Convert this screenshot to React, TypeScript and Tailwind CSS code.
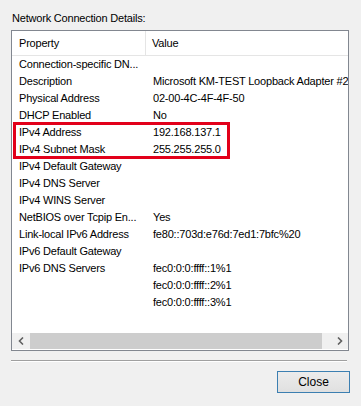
const rows: [string, string][] = [
  ["Connection-specific DN...", ""],
  ["Description", "Microsoft KM-TEST Loopback Adapter #2"],
  ["Physical Address", "02-00-4C-4F-4F-50"],
  ["DHCP Enabled", "No"],
  ["IPv4 Address", "192.168.137.1"],
  ["IPv4 Subnet Mask", "255.255.255.0"],
  ["IPv4 Default Gateway", ""],
  ["IPv4 DNS Server", ""],
  ["IPv4 WINS Server", ""],
  ["NetBIOS over Tcpip En...", "Yes"],
  ["Link-local IPv6 Address", "fe80::703d:e76d:7ed1:7bfc%20"],
  ["IPv6 Default Gateway", ""],
  ["IPv6 DNS Servers", "fec0:0:0:ffff::1%1"],
  ["", "fec0:0:0:ffff::2%1"],
  ["", "fec0:0:0:ffff::3%1"],
];

function Chevron({ dir }: { dir: "left" | "right" }) {
  return (
    <svg width="6" height="8" viewBox="0 0 6 8">
      <path
        d={dir === "left" ? "M5 0.5 L1.5 4 L5 7.5" : "M1 0.5 L4.5 4 L1 7.5"}
        fill="none"
        stroke="#606060"
        strokeWidth="1.6"
      />
    </svg>
  );
}

export default function App() {
  return (
    <div
      className="relative w-[361px] h-[406px] bg-[#f0f0f0] text-black text-[11px] tracking-[-0.2px] overflow-hidden"
      style={{ fontFamily: '"Liberation Sans", Arial, sans-serif' }}
    >
      <div className="pt-[11px] pl-[12px] h-[30px] leading-[15px]">
        Network Connection Details:
      </div>

      {/* list view */}
      <div className="ml-[11px] w-[338px] h-[321px] border border-[#828790] bg-white flex flex-col overflow-hidden">
        <div className="flex h-[25px] border-b border-[#e5e5e5] items-center">
          <div className="w-[134px] h-full pl-[7px] flex items-center border-r border-[#e5e5e5]">
            Property
          </div>
          <div className="pl-[6px]">Value</div>
        </div>
        <div className="flex flex-col">
          {rows.map(([p, v], i) => (
            <div key={i} className="flex h-[17px] items-center whitespace-nowrap">
              <div className="w-[135px] pl-[7px] shrink-0">{p}</div>
              <div className="pl-[6px]">{v}</div>
            </div>
          ))}
        </div>
        <div className="flex-1" />
        {/* horizontal scrollbar */}
        <div className="flex h-[16px] bg-[#f0f0f0] mb-[1px] shrink-0">
          <div className="w-[18px] flex items-center justify-center">
            <Chevron dir="left" />
          </div>
          <div className="w-[292px] bg-[#cdcdcd]" />
          <div className="flex-1" />
          <div className="w-[17px] flex items-center justify-center">
            <Chevron dir="right" />
          </div>
        </div>
      </div>

      {/* annotation box */}
      <div className="absolute left-[13px] top-[122px] w-[217px] h-[37px] border-[3px] border-[#e2001a]" />

      {/* separator */}
      <div className="ml-[11px] mt-[9px] w-[336px] h-[2px] border-t border-[#a0a0a0] border-b border-b-white" />

      <div className="flex justify-end pr-[11px] mt-[9px]">
        <button className="w-[73px] h-[22px] border border-[#3c7fb1] bg-gradient-to-b from-[#ececec] to-[#e0e0e0] text-[12px] tracking-normal">
          Close
        </button>
      </div>
    </div>
  );
}
